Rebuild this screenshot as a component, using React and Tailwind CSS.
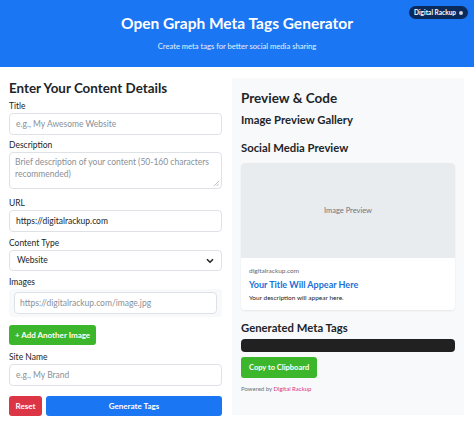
import React from 'react'

// Small form label used above every field
function Label({ children, className = '' }) {
  return <div className={`text-[8.5px] leading-[10px] mb-[2px] text-[#212529] ${className}`}>{children}</div>
}

function Field({ placeholder, value }) {
  return (
    <div className="h-[22px] rounded-[4px] border border-[#dee2e6] bg-white px-[6px] flex items-center text-[8.5px]">
      {value ? <span className="text-[#212529]">{value}</span> : <span className="text-[#8a9096]">{placeholder}</span>}
    </div>
  )
}

export default function App() {
  return (
    <div className="w-[474px] h-[425px] overflow-hidden bg-white font-['Lato',sans-serif] text-[#212529]">
      {/* Header */}
      <div className="relative h-[67px] bg-[#1a76f2] flex flex-col items-center pt-[13px]">
        <h1 className="text-[15.5px] font-bold text-white leading-[20px]">Open Graph Meta Tags Generator</h1>
        <p className="mt-[8px] text-[7.6px] text-white/90 leading-[10px]">Create meta tags for better social media sharing</p>
        <span className="absolute right-[6px] top-[6px] h-[13px] px-[5px] rounded-full bg-[#0b2a5c] text-white text-[6.5px] font-bold flex items-center gap-[3px]">
          Digital Rackup
          <span className="w-[4px] h-[4px] rounded-full bg-white/80" />
        </span>
      </div>

      <div className="grid grid-cols-[213px_232px] gap-[10px] pl-[9px] pt-[11px]">
        {/* Left: form */}
        <div>
          <h2 className="mt-[1px] text-[13.4px] font-bold leading-[18px] mb-[4px]">Enter Your Content Details</h2>

          <Label>Title</Label>
          <Field placeholder="e.g., My Awesome Website" />

          <Label className="mt-[5px]">Description</Label>
          <div className="relative h-[37px] rounded-[4px] border border-[#dee2e6] bg-white px-[5px] pt-[3px] text-[8.5px] leading-[12px] text-[#8a9096]">
            Brief description of your content (50-160 characters recommended)
            <svg className="absolute right-[2px] bottom-[2px]" width="5" height="5" viewBox="0 0 5 5">
              <path d="M5 0L0 5M5 2.5L2.5 5" stroke="#999" strokeWidth="0.6" />
            </svg>
          </div>

          <Label className="mt-[9px]">URL</Label>
          <Field value="https://digitalrackup.com" />

          <Label className="mt-[6px]">Content Type</Label>
          <div className="h-[21px] rounded-[4px] border border-[#dee2e6] bg-white px-[7px] flex items-center justify-between text-[8.5px]">
            <span>Website</span>
            <svg width="8" height="6" viewBox="0 0 8 6">
              <path d="M1 1.2L4 4.2L7 1.2" fill="none" stroke="#212529" strokeWidth="1.6" />
            </svg>
          </div>

          <Label className="mt-[6px]">Images</Label>
          <div className="bg-[#f8f9fa] rounded-[4px] px-[5px] py-[3px]">
            <div className="h-[22px] rounded-[4px] border border-[#dee2e6] bg-white px-[5px] flex items-center text-[8.5px] text-[#8a9096]">
              https://digitalrackup.com/image.jpg
            </div>
          </div>

          <button className="mt-[8px] h-[20px] px-[6px] rounded-[3px] bg-[#3cb62b] text-white text-[8px] font-bold leading-none">
            + Add Another Image
          </button>

          <Label className="mt-[7px]">Site Name</Label>
          <Field placeholder="e.g., My Brand" />

          <div className="mt-[10px] flex gap-[4px]">
            <button className="h-[20px] w-[33px] rounded-[3px] bg-[#dc3545] text-white text-[8px] font-bold leading-none">Reset</button>
            <button className="h-[20px] flex-1 rounded-[3px] bg-[#1a76f2] text-white text-[8px] font-bold leading-none">Generate Tags</button>
          </div>
        </div>

        {/* Right: preview panel */}
        <div className="bg-[#f8f9fa] h-[337px] px-[9px] pt-[12px]">
          <h2 className="text-[13.5px] font-bold leading-[16px]">Preview &amp; Code</h2>
          <h3 className="mt-[7px] text-[11.3px] font-bold leading-[14px]">Image Preview Gallery</h3>
          <h3 className="mt-[14px] text-[11.3px] font-bold leading-[14px]">Social Media Preview</h3>

          <div className="mt-[8px] rounded-[4px] overflow-hidden bg-white shadow-[0_1px_2px_rgba(0,0,0,0.08)]">
            <div className="h-[95px] bg-[#e9ecef] flex items-center justify-center text-[7.5px] text-[#6c757d]">
              Image Preview
            </div>
            <div className="px-[8px] pt-[9px] pb-[8px]">
              <div className="text-[6.5px] text-[#606770] leading-[8px]">digitalrackup.com</div>
              <div className="mt-[4px] text-[9px] font-bold text-[#1a6fd8] leading-[12px]">Your Title Will Appear Here</div>
              <div className="mt-[3px] text-[6.5px] text-[#212529] leading-[8px]">Your description will appear here.</div>
            </div>
          </div>

          <h3 className="mt-[11px] text-[11.3px] font-bold leading-[14px]">Generated Meta Tags</h3>
          <div className="mt-[4px] h-[13px] rounded-[4px] bg-[#212121]" />
          <button className="h-[21px] px-[8px] rounded-[3px] bg-[#3cb62b] text-white text-[7.5px] font-bold leading-none">
            Copy to Clipboard
          </button>
          <div className="mt-[8px] text-[6px] text-[#6c757d] leading-none">
            Powered by <span className="text-[#d63384]">Digital Rackup</span>
          </div>
        </div>
      </div>
    </div>
  )
}
